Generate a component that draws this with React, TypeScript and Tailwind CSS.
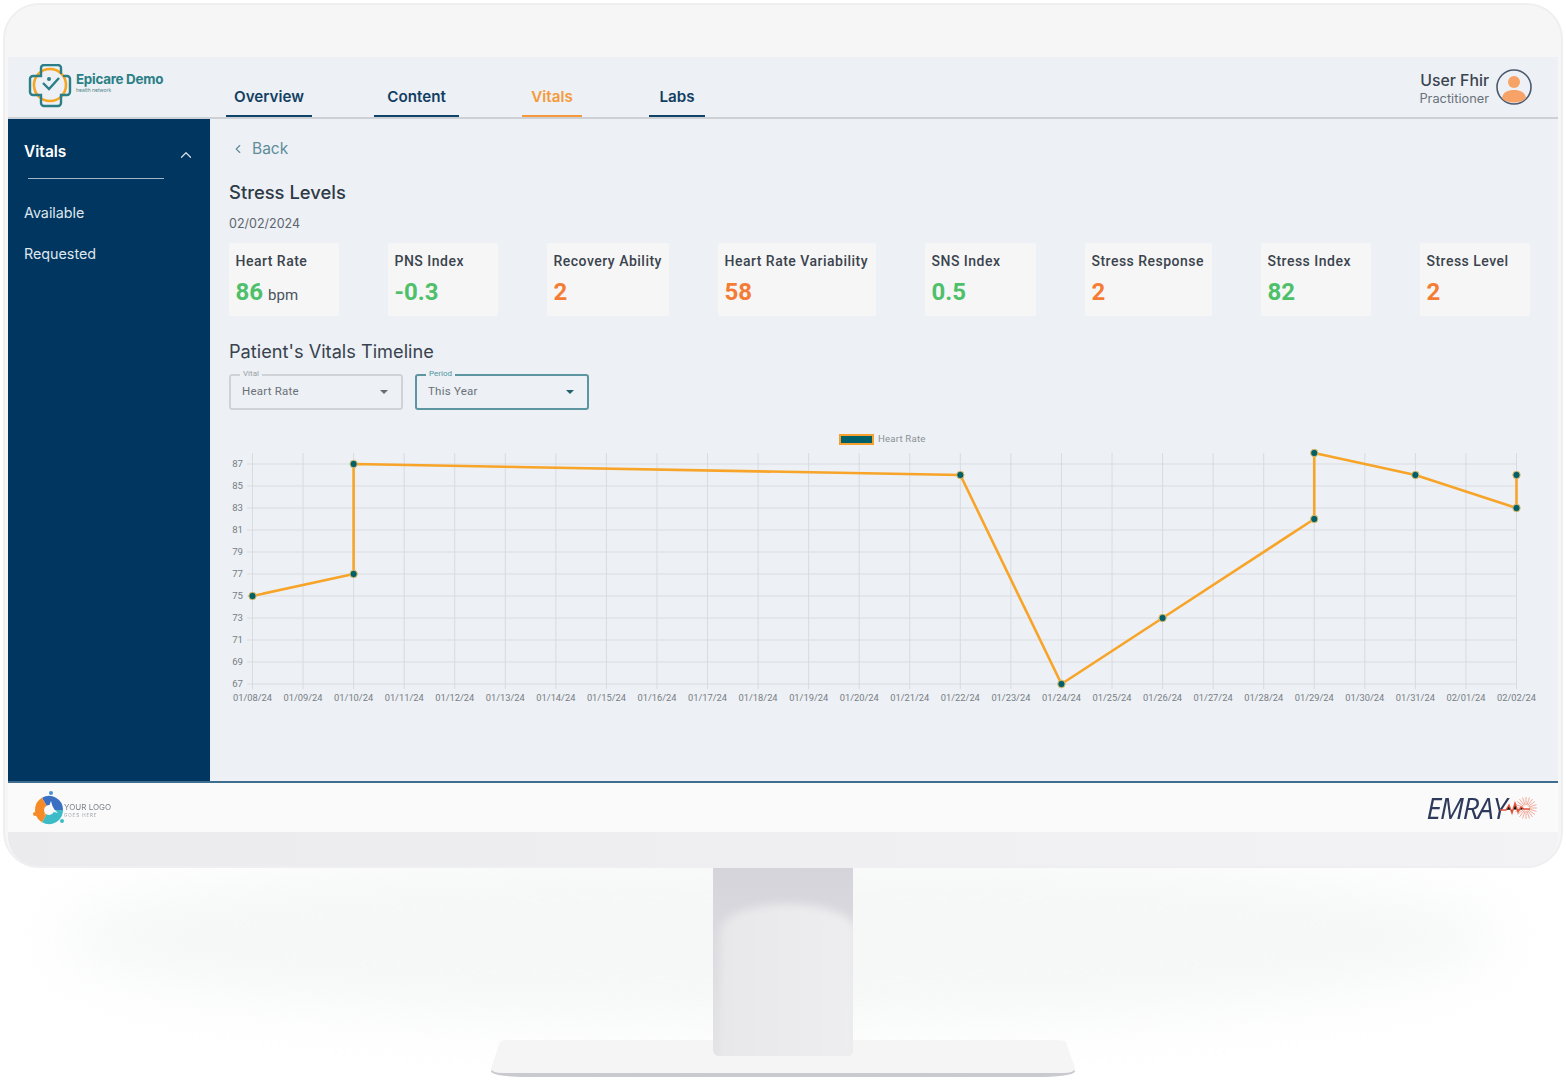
import { ChevronLeft, ChevronUp } from "lucide-react";

type Metric = { label: string; value: string; unit?: string; good: boolean; width: string };

const metrics: Metric[] = [
  { label: "Heart Rate", value: "86", unit: "bpm", good: true, width: "w-[110px]" },
  { label: "PNS Index", value: "-0.3", good: true, width: "w-[110px]" },
  { label: "Recovery Ability", value: "2", good: false, width: "w-[122px]" },
  { label: "Heart Rate Variability", value: "58", good: false, width: "w-[158px]" },
  { label: "SNS Index", value: "0.5", good: true, width: "w-[111px]" },
  { label: "Stress Response", value: "2", good: false, width: "w-[127px]" },
  { label: "Stress Index", value: "82", good: true, width: "w-[110px]" },
  { label: "Stress Level", value: "2", good: false, width: "w-[110px]" },
];

const tabs = [
  { label: "Overview", cls: "w-[86px] text-[#123f63] border-[#0f4468]", gap: "" },
  { label: "Content", cls: "w-[85px] text-[#123f63] border-[#0f4468]", gap: "ml-[62px]" },
  { label: "Vitals", cls: "w-[60px] text-[#f59a3c] border-[#f59a3c]", gap: "ml-[63px]" },
  { label: "Labs", cls: "w-[56px] text-[#123f63] border-[#0f4468]", gap: "ml-[67px]" },
];

const dates = [
  "01/08/24", "01/09/24", "01/10/24", "01/11/24", "01/12/24", "01/13/24", "01/14/24",
  "01/15/24", "01/16/24", "01/17/24", "01/18/24", "01/19/24", "01/20/24", "01/21/24",
  "01/22/24", "01/23/24", "01/24/24", "01/25/24", "01/26/24", "01/27/24", "01/28/24",
  "01/29/24", "01/30/24", "01/31/24", "02/01/24", "02/02/24",
];

const readings: [number, number][] = [
  [0, 75], [2, 77], [2, 87], [14, 86], [16, 67], [18, 73],
  [21, 82], [21, 88], [23, 86], [25, 83], [25, 86],
];

const xAt = (i: number) => 252.5 + i * 50.56;
const yAt = (v: number) => 464 + (87 - v) * 11;

function EpicareLogo() {
  return (
    <svg width="44" height="44" viewBox="0 0 44 44" fill="none" className="shrink-0">
      <circle cx="22" cy="21" r="16" stroke="#f5a623" strokeWidth="2.6" />
      <path
        d="M33 9 V4 a3 3 0 0 0-3-3 H16 a3 3 0 0 0-3 3 V12 H5 a3 3 0 0 0-3 3 V28 a3 3 0 0 0 3 3 H13 V39 a3 3 0 0 0 3 3 H30 a3 3 0 0 0 3-3 V31 H39 a3 3 0 0 0 3-3 V15 a3 3 0 0 0-3-3 H36"
        stroke="#2b7f86"
        strokeWidth="2.4"
        strokeLinecap="round"
      />
      <circle cx="21" cy="15" r="2" fill="#2b7f86" />
      <path d="M15 19 l6 6 10-11" stroke="#2b7f86" strokeWidth="2.4" />
    </svg>
  );
}

function PartnerLogo() {
  return (
    <svg width="32" height="36" viewBox="0 0 32 36" fill="none" className="shrink-0">
      <circle cx="18" cy="3" r="2" fill="#4a8fd8" />
      <circle cx="2" cy="24" r="2" fill="#f58a26" />
      <circle cx="29" cy="31" r="2" fill="#3bbcc6" />
      <path d="M11.25 11.77 A9.5 9.5 0 0 1 25.5 20" stroke="#3a6fc4" strokeWidth="9" />
      <path d="M25.5 20 A9.5 9.5 0 0 1 11.25 28.23" stroke="#3bbcc6" strokeWidth="9" />
      <path d="M11.25 28.23 A9.5 9.5 0 0 1 11.25 11.77" stroke="#f58a26" strokeWidth="9" />
      <path d="M18 11 L20 18 L25 23 L17 21 L11 25 L15 19 Z" fill="#fafafa" />
    </svg>
  );
}

function EmraySpark() {
  const rays = Array.from({ length: 20 }, (_, i) => (i * Math.PI) / 10);
  return (
    <svg width="38" height="26" viewBox="0 0 38 26" className="-ml-[6px]">
      {rays.map((a) => (
        <line
          key={a}
          x1={26 + Math.cos(a) * 3}
          y1={13 + Math.sin(a) * 3}
          x2={26 + Math.cos(a) * 11}
          y2={13 + Math.sin(a) * 11}
          stroke="#f0907f"
          strokeWidth="1"
          opacity="0.75"
        />
      ))}
      <path d="M0 15 H6 L9 10 L12 18 L15 8 L18 17 L21 12 L24 14 H30" stroke="#e2553a" strokeWidth="1.4" />
    </svg>
  );
}

function VitalsChart() {
  const line = readings.map(([i, v]) => `${xAt(i)},${yAt(v)}`).join(" ");
  const ticks = Array.from({ length: 11 }, (_, i) => 87 - i * 2);
  return (
    <svg viewBox="229 430 1320 280" width="1320" height="280" className="block" fontFamily="Roboto, sans-serif">
      <rect x="840" y="435" width="33" height="9" fill="#00606a" stroke="#f5a02c" strokeWidth="2" />
      <text x="878" y="442" fontSize="9.6" letterSpacing="0.2" fill="#8a9097">Heart Rate</text>
      {ticks.map((t) => (
        <g key={t}>
          <line x1="247" x2="1516" y1={yAt(t)} y2={yAt(t)} stroke="#dadde1" strokeWidth="1" />
          <text x="243" y={yAt(t) + 3} fontSize="9.6" fill="#777e85" textAnchor="end">{t}</text>
        </g>
      ))}
      {dates.map((d, i) => (
        <g key={d}>
          <line x1={xAt(i)} x2={xAt(i)} y1="453" y2="689" stroke="#d8dbe0" strokeWidth="1" />
          <text x={xAt(i)} y="701" fontSize="9.3" fill="#777e85" textAnchor="middle">{d}</text>
        </g>
      ))}
      <polyline points={line} fill="none" stroke="#f7a428" strokeWidth="2.6" strokeLinejoin="round" />
      {readings.map(([i, v]) => (
        <circle key={`${i}-${v}`} cx={xAt(i)} cy={yAt(v)} r="3.7" fill="#00606a" stroke="#e9c06a" strokeWidth="1" />
      ))}
    </svg>
  );
}

function SelectBox({ label, value, active }: { label: string; value: string; active?: boolean }) {
  return (
    <div
      className={`relative flex h-[36px] w-[174px] items-center justify-between rounded-[3px] pl-[11px] pr-[13px] ${
        active ? "border-2 border-[#5d95a0]" : "border-2 border-[#cfd3d8]"
      }`}
    >
      <span
        className={`absolute -top-[7px] left-[9px] bg-[#edf0f4] px-[3px] text-[8px] leading-[10px] ${
          active ? "text-[#4f949f]" : "text-[#9aa0a6]"
        }`}
      >
        {label}
      </span>
      <span className="text-[11.5px] tracking-[0.02em] text-[#6a7178]">{value}</span>
      <span className={`h-0 w-0 border-x-[4px] border-t-[4px] border-x-transparent ${active ? "border-t-[#21606f]" : "border-t-[#666c72]"}`} />
    </div>
  );
}

export default function App() {
  return (
    <div className="relative h-[1080px] w-[1566px] overflow-hidden bg-white font-['Inter',sans-serif]">
      {/* soft shadow under the monitor */}
      <div className="absolute left-[60px] top-[850px] h-[175px] w-[1440px] rounded-[50%] bg-[#f6f7f7] blur-[28px]" />

      <div className="relative ml-[3px] mt-[3px] flex h-[865px] w-[1560px] flex-col rounded-[36px] border-2 border-[#efeff1] bg-[#f6f6f7] px-[3px] pt-[52px]">
        <div className="flex h-[775px] flex-col overflow-hidden blur-[0.6px]">
          {/* top bar */}
          <header className="flex h-[62px] shrink-0 items-end border-b-2 border-[#cdd1d6] bg-[#edf0f4]">
            <div className="flex h-full w-[218px] shrink-0 items-start pl-[20px] pt-[7px]">
              <EpicareLogo />
              <div className="ml-[4px] mt-[7px]">
                <div className="text-[13.4px] font-bold leading-[16px] tracking-[-0.02em] text-[#2b7f86]">Epicare Demo</div>
                <div className="text-[5px] leading-[6px] text-[#4f8489]">health network</div>
              </div>
            </div>
            {tabs.map((t) => (
              <div
                key={t.label}
                className={`flex h-[38px] items-center justify-center border-b-2 pt-[1px] text-[15.2px] font-semibold ${t.cls} ${t.gap}`}
              >
                {t.label}
              </div>
            ))}
            <div className="ml-auto flex h-full items-center gap-[7px] pr-[26px]">
              <div className="mt-[4px] text-right">
                <div className="text-[15.8px] font-medium leading-[19px] text-[#3a4450]">User Fhir</div>
                <div className="text-[12.8px] leading-[17px] text-[#69727c]">Practitioner</div>
              </div>
              <svg width="36" height="36" viewBox="0 0 36 36" className="-mt-[1px]">
                <circle cx="18" cy="18" r="17" fill="none" stroke="#4a5a70" strokeWidth="1.6" />
                <circle cx="18" cy="13" r="6" fill="#f7a266" />
                <path d="M6 29 C7 23 12 21 18 21 C24 21 29 23 30 29 C26 35 10 35 6 29 Z" fill="#f7a266" />
              </svg>
            </div>
          </header>

          <div className="flex min-h-0 flex-1 border-b-2 border-[#3f6d8e]">
            {/* sidebar */}
            <aside className="w-[202px] shrink-0 bg-[#003660] pl-[16px] pr-[16px] pt-[21px] text-white">
              <div className="flex items-center justify-between">
                <span className="text-[15.5px] font-semibold leading-[20px]">Vitals</span>
                <ChevronUp size={18} strokeWidth={1.6} className="mt-[6px] -mr-[1px] text-[#d5dfe8]" />
              </div>
              <div className="ml-[4px] mt-[14px] h-px w-[136px] bg-[#9fb6c8]" />
              <div className="mt-[25px] text-[14.3px] leading-[18px] text-[#dfe7ee]">Available</div>
              <div className="mt-[23px] text-[14.3px] leading-[18px] text-[#dfe7ee]">Requested</div>
            </aside>

            {/* main panel */}
            <main className="min-w-0 flex-1 bg-[#edf0f4] pl-[19px] pr-[28px]">
              <div className="mt-[20px] flex h-[20px] items-center pl-[2px] text-[15.5px] text-[#5f8c9b]">
                <ChevronLeft size={14} strokeWidth={2} />
                <span className="ml-[7px]">Back</span>
              </div>
              <h1 className="mt-[20px] text-[18.4px] font-medium leading-[26px] text-[#2f3a46]">Stress Levels</h1>
              <div className="mt-[10px] text-[12.5px] leading-[18px] text-[#5d6670]">02/02/2024</div>

              <div className="mt-[10px] flex justify-between">
                {metrics.map((m) => (
                  <div key={m.label} className={`h-[73px] rounded-[2px] bg-[#f6f6f6] pl-[6.5px] pt-[9px] font-['Roboto',sans-serif] ${m.width}`}>
                    <div className="whitespace-nowrap text-[14px] font-medium leading-[18px] tracking-[0.035em] text-[#3b444e]">{m.label}</div>
                    <div className="mt-[7px] flex items-baseline gap-[5px] leading-[30px]">
                      <span className={`text-[24px] font-bold ${m.good ? "text-[#4fc06a]" : "text-[#f47c35]"}`}>{m.value}</span>
                      {m.unit ? <span className="text-[15px] text-[#4a535c]">{m.unit}</span> : null}
                    </div>
                  </div>
                ))}
              </div>

              <h2 className="mt-[22px] text-[18.2px] leading-[26px] text-[#38434f]">Patient's Vitals Timeline</h2>
              <div className="mt-[10px] flex gap-[12px] font-['Roboto',sans-serif]">
                <SelectBox label="Vital" value="Heart Rate" />
                <SelectBox label="Period" value="This Year" active />
              </div>
              <div className="mt-[20px]">
                <VitalsChart />
              </div>
            </main>
          </div>

          {/* footer strip */}
          <footer className="flex h-[49px] shrink-0 items-center justify-between bg-[#fafafa] pl-[25px] pr-[20px]">
            <div className="flex items-center">
              <PartnerLogo />
              <div className="-ml-[1px] mt-[6px]">
                <div className="text-[8px] leading-[10px] text-[#7e8388]">YOUR LOGO</div>
                <div className="text-[4.5px] leading-[7px] tracking-[0.2em] text-[#9a9ea2]">GOES HERE</div>
              </div>
            </div>
            <div className="flex items-center">
              <span className="font-['Open_Sans',sans-serif] text-[28.5px] italic leading-[30px] tracking-[-0.04em] text-[#2e3a5c]">EMRAY</span>
              <EmraySpark />
            </div>
          </footer>
        </div>
        <div className="flex-1 rounded-b-[30px] bg-gradient-to-r from-[#ebebed] to-[#f3f3f5]" />
      </div>

      {/* stand */}
      <div className="relative flex flex-col items-center">
        <div className="relative z-10 h-[188px] w-[140px] overflow-hidden rounded-b-[6px] bg-gradient-to-b from-[#d4d4da] to-[#e4e4e8]">
          <div className="absolute left-[7px] top-[36px] h-[190px] w-[136px] rounded-t-[50%_14%] bg-gradient-to-r from-[#e8e8eb] to-[#eeeef0] blur-[5px]" />
        </div>
        <svg width="600" height="40" viewBox="0 0 600 40" className="-mt-[16px]">
          <path d="M8 31 Q8 36 40 37 H560 Q592 36 592 31 L590 28 H10 Z" fill="#c9c9d0" />
          <path d="M17 2 Q18 0 30 0 H570 Q582 0 583 2 L592 28 Q592 33 580 33 H20 Q8 33 8 28 Z" fill="#f5f5f6" />
        </svg>
      </div>
    </div>
  );
}
